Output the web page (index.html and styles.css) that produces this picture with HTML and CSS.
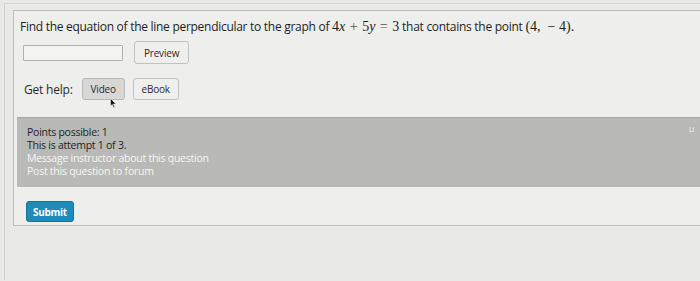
FILE: index.html
```
<!DOCTYPE html>
<html lang="en">
<head>
    <meta charset="UTF-8">
    <meta name="viewport" content="width=device-width, initial-scale=1.0">
    <title>Question</title>
    <link rel="stylesheet" href="styles.css">
</head>
<body>
    <div class="outer">
        <div class="panel">
            <p class="question">Find the equation of the line perpendicular to the graph of <span class="math"><span class="n">4</span><i>x</i> <span class="op">+</span> <span class="n">5</span><i>y</i> <span class="op">=</span> <span class="n">3</span></span> that contains the point <span class="math"><span class="n">(4,&nbsp;&nbsp;&minus;&nbsp;4).</span></span></p>

            <div class="answer-row">
                <input type="text" class="answer">
                <button class="btn">Preview</button>
            </div>

            <div class="help-row">
                <span class="help-label">Get help:</span>
                <button class="btn btn-active">Video</button>
                <button class="btn">eBook</button>
                <svg class="cursor" width="7" height="11" viewBox="0 0 7 11">
                    <path d="M0.5 0.5 L0.5 8 L2.3 6.4 L3.6 9.6 L4.8 9.1 L3.5 6 L6 6 Z" fill="#111" stroke="#eee" stroke-width="0.6"/>
                </svg>
            </div>

            <div class="info">
                <div>Points possible: 1</div>
                <div>This is attempt 1 of 3.</div>
                <div class="link">Message instructor about this question</div>
                <div class="link">Post this question to forum</div>
                <span class="license">Li</span>
            </div>

            <button class="submit">Submit</button>
        </div>
    </div>
</body>
</html>
```

FILE: styles.css
```
html, body {
    margin: 0;
    overflow: hidden;
}
body {
    background: #e9e9e7;
    font-family: "Open Sans", Arial, sans-serif;
    color: #2b2b2b;
    padding: 3px 0 0 4px;
    height: 278px;
}
.outer {
    border-left: 1px solid #d2d2d0;
    border-top: 1px solid #d8d8d6;
    width: 696px;
    height: 277px;
    padding: 6px 0 0 8px;
    box-sizing: border-box;
}
.panel {
    position: relative;
    background: #eeeeec;
    border: 1px solid #bdbdbb;
    border-right: none;
    height: 216px;
    box-sizing: border-box;
}
.question {
    margin: 0;
    padding: 8px 0 0 6px;
    font-size: 12px;
    line-height: 16px;
    letter-spacing: -0.28px;
    color: #1e1e1e;
    white-space: nowrap;
}
.math {
    font-family: "Liberation Serif", "Times New Roman", serif;
    font-size: 14px;
    letter-spacing: 0;
}
.math i {
    font-style: italic;
}
.op {
    color: #555;
    margin: 0 1px;
}
.answer-row {
    display: flex;
    align-items: center;
    gap: 11px;
    margin: 6px 0 0 9px;
    height: 23px;
}
.answer {
    width: 98px;
    height: 14px;
    padding: 0;
    border: 1px solid #b0b0ae;
    background: #f3f3f1;
    border-radius: 1px;
}
.btn {
    font-family: "Open Sans", Arial, sans-serif;
    font-size: 10px;
    color: #2b2b2b;
    background: #efefed;
    border: 1px solid #c2c2c0;
    border-radius: 3px;
    height: 23px;
    padding: 0 9px;
    letter-spacing: -0.2px;
}
.help-row {
    position: relative;
    display: flex;
    align-items: center;
    gap: 8px;
    margin: 14px 0 0 10px;
    height: 22px;
}
.help-label {
    font-size: 12px;
    letter-spacing: -0.2px;
    margin-right: 1px;
    color: #2b2b2b;
}
.help-row .btn {
    height: 22px;
}
.btn-active {
    background: #d7d7d5;
    border-color: #b9b9b7;
    width: 43px;
    padding: 0;
}
.help-row .btn:last-of-type {
    width: 46px;
    padding: 0;
}
.cursor {
    position: absolute;
    left: 86px;
    top: 20px;
}
.info {
    position: relative;
    margin: 17px 0 0 3px;
    background: #b9b9b7;
    border-top: 1px solid #a6a6a4;
    padding: 8px 0 9px 10px;
    font-size: 10.5px;
    line-height: 13px;
    letter-spacing: -0.25px;
    color: #1e1e1e;
}
.info .link {
    color: #f6f6f4;
}
.license {
    position: absolute;
    left: 672px;
    top: 5px;
    font-size: 7px;
    color: #f4f4f2;
}
.submit {
    display: block;
    margin: 14px 0 0 12px;
    width: 48px;
    height: 21px;
    padding: 0;
    background: #1f8cb8;
    border: 1px solid #17739a;
    border-radius: 3px;
    color: #fff;
    font-family: "Open Sans", Arial, sans-serif;
    font-size: 10px;
    font-weight: bold;
    letter-spacing: -0.3px;
}
```
